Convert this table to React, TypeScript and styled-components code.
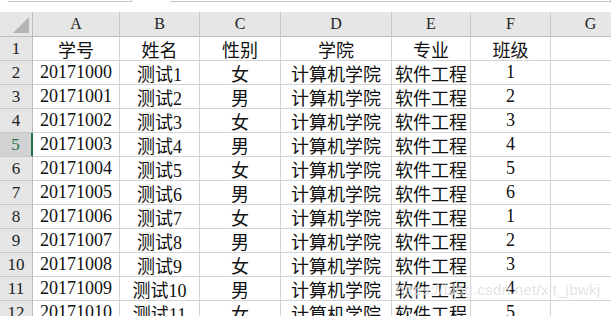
import React from 'react';
import styled, { createGlobalStyle } from 'styled-components';

const GlobalStyle = createGlobalStyle`
    html, body {
        margin: 0;
        padding: 0;
        background: #ffffff;
        overflow: hidden;
    }
`;

const COLUMNS = ['A', 'B', 'C', 'D', 'E', 'F', 'G'];
const WIDTHS = [33, 87, 80, 81, 111, 79, 80, 80];
const SELECTED_ROW = 5;

const Sheet = styled.div`
    position: relative;
    width: 611px;
    height: 316px;
    overflow: hidden;
    font-family: 'Liberation Serif', 'Noto Sans CJK SC', serif;
    color: #111;
`;

const FormulaStrip = styled.div`
    display: flex;
    height: 12px;
    background: #ffffff;
    box-sizing: border-box;
`;

const StripBox = styled.div<{ $left: number; $width: number }>`
    margin-left: ${(p) => p.$left}px;
    width: ${(p) => p.$width}px;
    height: 2px;
    border-bottom: 1px solid #c6c6c6;
    border-right: 1px solid #c6c6c6;
    box-sizing: border-box;
`;

const Grid = styled.div`
    display: grid;
    grid-template-columns: ${WIDTHS.map((w) => `${w}px`).join(' ')};
    grid-auto-rows: 24px;
    grid-template-rows: 25px;
`;

const Corner = styled.div`
    position: relative;
    background: #e6e6e6;
    border-right: 1px solid #bdbdbd;
    border-bottom: 1px solid #bdbdbd;
    box-sizing: border-box;

    &::after {
        content: '';
        position: absolute;
        right: 3px;
        bottom: 3px;
        width: 0;
        height: 0;
        border-left: 16px solid transparent;
        border-bottom: 16px solid #b4b4b4;
    }
`;

const ColHeader = styled.div`
    display: flex;
    align-items: center;
    justify-content: center;
    background: #e6e6e6;
    border-right: 1px solid #c8c8c8;
    border-bottom: 1px solid #bdbdbd;
    box-sizing: border-box;
    font-size: 16px;
    color: #222;
`;

const RowHeader = styled.div<{ $selected?: boolean }>`
    display: flex;
    align-items: center;
    justify-content: center;
    background: ${(p) => (p.$selected ? '#d2d2d2' : '#e6e6e6')};
    color: ${(p) => (p.$selected ? '#217346' : '#222')};
    border-right: ${(p) => (p.$selected ? '2px solid #217346' : '1px solid #bdbdbd')};
    border-bottom: 1px solid #c8c8c8;
    box-sizing: border-box;
    font-size: 17px;
`;

const Cell = styled.div`
    display: flex;
    align-items: center;
    justify-content: center;
    border-right: 1px solid #d4d4d4;
    border-bottom: 1px solid #d4d4d4;
    box-sizing: border-box;
    font-size: 18px;
    white-space: nowrap;
    overflow: hidden;
`;

const Watermark = styled.div`
    position: absolute;
    left: 396px;
    top: 281px;
    font-family: 'Liberation Sans', Arial, sans-serif;
    font-size: 15px;
    letter-spacing: 0.3px;
    color: rgba(200, 200, 200, 0.5);
    text-shadow: 0 0 1px rgba(255, 255, 255, 0.8);
    pointer-events: none;
`;

const header = ['学号', '姓名', '性别', '学院', '专业', '班级', ''];

const rows: string[][] = [header];
for (let i = 0; i < 11; i++) {
    rows.push([
        String(20171000 + i),
        `测试${i + 1}`,
        i % 2 === 0 ? '女' : '男',
        '计算机学院',
        '软件工程',
        String((i % 6) + 1),
        '',
    ]);
}

export default function App() {
    return (
        <Sheet>
            <GlobalStyle />
            <FormulaStrip>
                <StripBox $left={8} $width={124} />
                <StripBox $left={38} $width={441} />
            </FormulaStrip>
            <Grid>
                <Corner />
                {COLUMNS.map((c) => (
                    <ColHeader key={c}>{c}</ColHeader>
                ))}
                {rows.map((row, r) => (
                    <React.Fragment key={r}>
                        <RowHeader $selected={r + 1 === SELECTED_ROW}>{r + 1}</RowHeader>
                        {row.map((v, c) => (
                            <Cell key={c}>{v}</Cell>
                        ))}
                    </React.Fragment>
                ))}
            </Grid>
            <Watermark>https://blog.csdn.net/xlt_jbwkj</Watermark>
        </Sheet>
    );
}
